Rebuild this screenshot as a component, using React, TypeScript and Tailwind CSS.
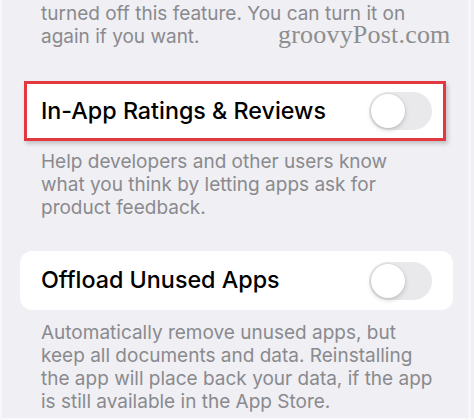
type ToggleProps = { on?: boolean };

// iOS-style switch, drawn in its "off" state
const Toggle = ({ on = false }: ToggleProps) => (
  <div
    className={`relative w-[63px] h-[38px] rounded-full shrink-0 ${on ? 'bg-[#34c759]' : 'bg-[#e9e9eb]'}`}
  >
    <div
      className={`absolute top-[2px] w-[34px] h-[34px] rounded-full bg-white shadow-[0_2px_5px_rgba(0,0,0,0.18),0_0_0_0.5px_rgba(0,0,0,0.06)] ${on ? 'right-[2px]' : 'left-[2px]'}`}
    />
  </div>
);

const Footnote = ({ children, className = '' }: { children: React.ReactNode; className?: string }) => (
  <p className={`pl-[41px] pr-[20px] text-[19px] leading-[23px] text-[#8a8a8e] ${className}`}>{children}</p>
);

export default function App() {
  return (
    <div
      className="relative w-[474px] h-[420px] overflow-hidden bg-[#efeff4] border-l-[2px] border-l-[#f7f7fa] flex flex-col"
      style={{ fontFamily: 'Inter, "Noto Sans", "Liberation Sans", sans-serif' }}
    >
      <Footnote className="mt-[2px] -ml-[2px]">
        turned off this feature. You can turn it on
        <br />
        again if you want.
      </Footnote>

      {/* site watermark */}
      <span
        className="absolute left-[276px] top-[26px] text-[26px] leading-[18px] text-[#8e8e8e] tracking-[0.2px]"
        style={{ fontFamily: '"Liberation Serif", "DejaVu Serif", serif' }}
      >
        groovyPost.com
      </span>

      {/* highlighted row */}
      <div className="mt-[33px] ml-[22px] w-[422px] h-[60px] border-[3px] border-[#e2383f] bg-white flex items-center justify-between pl-[14px] pr-[11px] shadow-[2px_3px_4px_rgba(0,0,0,0.18)]">
        <span className="text-[23.3px] font-medium text-black">In-App Ratings &amp; Reviews</span>
        <Toggle />
      </div>

      <Footnote className="mt-[9px] -ml-[2px]">
        Help developers and other users know
        <br />
        what you think by letting apps ask for
        <br />
        product feedback.
      </Footnote>

      <div className="mt-[32px] ml-[18px] w-[433px] h-[59px] rounded-[12px] bg-white flex items-center justify-between pl-[21px] pr-[21px]">
        <span className="text-[23.3px] font-medium text-black">Offload Unused Apps</span>
        <Toggle />
      </div>

      <Footnote className="mt-[11px] -ml-[2px]">
        Automatically remove unused apps, but
        <br />
        keep all documents and data. Reinstalling
        <br />
        the app will place back your data, if the app
        <br />
        is still available in the App Store.
      </Footnote>

      <div className="absolute right-[3px] top-0 bottom-0 w-[3px] bg-[#f7f7fa]" />
      <div className="absolute left-0 right-0 bottom-0 h-[2px] bg-[#fafafa]" />
    </div>
  );
}
